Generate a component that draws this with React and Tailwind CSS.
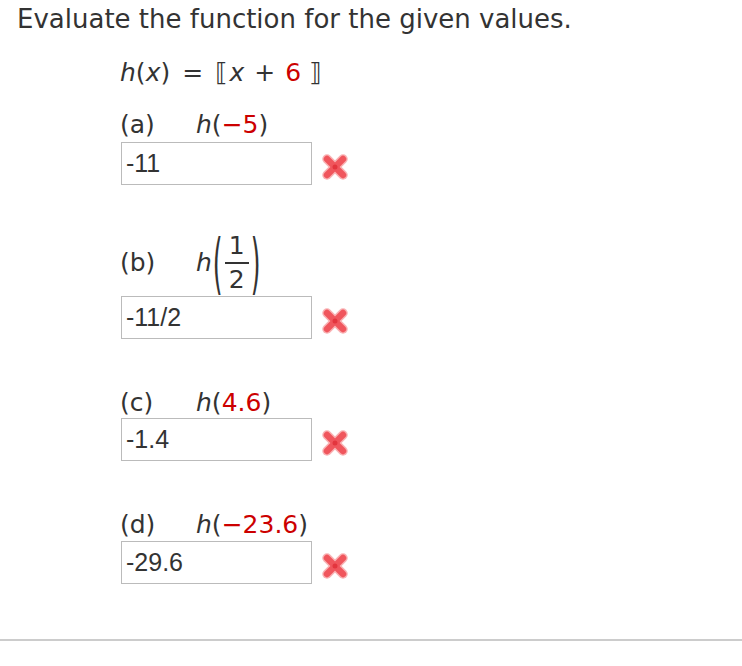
import React from "react";

const RED = "text-[#cc0000]";

function WrongMark() {
  return (
    <svg width="28" height="26" viewBox="0 0 28 26" className="shrink-0">
      <g strokeLinecap="round">
        <line x1="6" y1="5" x2="22" y2="21" stroke="#f9b2b4" strokeWidth="9.5" />
        <line x1="22" y1="5" x2="6" y2="21" stroke="#f9b2b4" strokeWidth="9.5" />
        <line x1="6" y1="5" x2="22" y2="21" stroke="#f0565d" strokeWidth="6.5" />
        <line x1="22" y1="5" x2="6" y2="21" stroke="#f0565d" strokeWidth="6.5" />
        <circle cx="14" cy="13" r="2.5" fill="#e3353e" />
      </g>
    </svg>
  );
}

function Answer({ value }) {
  return (
    <div className="flex items-center gap-[9px] ml-[1px]">
      <input
        type="text"
        readOnly
        defaultValue={value}
        className="w-[191px] h-[43px] border border-[#bbbbbb] bg-white pl-[4px] text-[25px] text-[#333] outline-none"
        style={{ fontFamily: '"Liberation Sans", Arial, sans-serif' }}
      />
      <div className="mt-[7px]">
        <WrongMark />
      </div>
    </div>
  );
}

function Label({ children }) {
  return <span className="inline-block w-[76px]">{children}</span>;
}

export default function App() {
  return (
    <main className="min-h-[666px] bg-white text-[#333] font-['DejaVu_Sans',Verdana,sans-serif]">
      {/* QUESTION */}
      <div className="pt-[4px] pl-[17px]">
        <h1 className="text-[26px] leading-[30px] font-normal">
          Evaluate the function for the given values.
        </h1>
      </div>

      <div className="pl-[120px] text-[25px]">
        {/* FUNCTION */}
        <p className="mt-[24px] leading-[30px] whitespace-nowrap">
          <i>h</i>(<i>x</i>)<span className="ml-[12px]">=</span>
          <span className="ml-[12px]">⟦</span>
          <i className="ml-[2px]">x</i>
          <span className="ml-[10px]">+</span>
          <span className={`ml-[10px] ${RED}`}>6</span>
          <span className="ml-[8px]">⟧</span>
        </p>

        {/* (a) */}
        <p className="mt-[22px] leading-[30px] whitespace-nowrap">
          <Label>(a)</Label>
          <i>h</i>(<span className={RED}>−5</span>)
        </p>
        <div className="mt-[2px]">
          <Answer value="-11" />
        </div>

        {/* (b) */}
        <div className="mt-[48px] h-[60px] flex items-center whitespace-nowrap">
          <Label>(b)</Label>
          <i>h</i>
          <span className="inline-block scale-y-[2.6] leading-none ml-[1px]">(</span>
          <span className="inline-flex flex-col items-center mx-[2px]">
            <span className="leading-[22px]">1</span>
            <span className="block w-[24px] h-[2px] bg-[#333] my-[5px]"></span>
            <span className="leading-[22px]">2</span>
          </span>
          <span className="inline-block scale-y-[2.6] leading-none">)</span>
        </div>
        <div className="mt-[3px]">
          <Answer value="-11/2" />
        </div>

        {/* (c) */}
        <p className="mt-[49px] leading-[30px] whitespace-nowrap">
          <Label>(c)</Label>
          <i>h</i>(<span className={RED}>4.6</span>)
        </p>
        <Answer value="-1.4" />

        {/* (d) */}
        <p className="mt-[49px] leading-[30px] whitespace-nowrap">
          <Label>(d)</Label>
          <i>h</i>(<span className={RED}>−23.6</span>)
        </p>
        <div className="mt-[1px]">
          <Answer value="-29.6" />
        </div>
      </div>

      <div className="mt-[55px] h-[2px] bg-[#cccccc]"></div>
    </main>
  );
}
